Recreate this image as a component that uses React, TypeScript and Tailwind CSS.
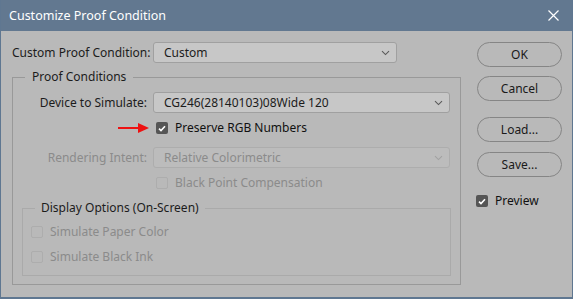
import React from 'react';

const font = { fontFamily: '"Noto Sans", "Open Sans", sans-serif' };

const Chevron: React.FC<{ muted?: boolean }> = ({ muted }) => (
    <svg width="9" height="6" viewBox="0 0 9 6" className="shrink-0">
        <path d="M1 1.2 L4.5 4.6 L8 1.2" fill="none" stroke={muted ? '#a2a2a2' : '#5a5a5a'} strokeWidth="1.1" />
    </svg>
);

const Select: React.FC<{ value: string; width: string; disabled?: boolean }> = ({ value, width, disabled }) => (
    <div
        className={`${width} h-[21px] flex items-center justify-between pl-[10px] pr-[6px] rounded-[3px] border ${
            disabled ? 'border-[#adadad] bg-[#bcbcbc] text-[#8b8b8b]' : 'border-[#a0a0a0] bg-[#c7c7c7] text-[#1c1c1c]'
        }`}
    >
        <span>{value}</span>
        <Chevron muted={disabled} />
    </div>
);

const Check: React.FC<{ checked?: boolean }> = ({ checked }) =>
    checked ? (
        <div className="w-[12px] h-[12px] rounded-[2px] bg-[#555555] flex items-center justify-center shrink-0">
            <svg width="8" height="7" viewBox="0 0 8 7">
                <path d="M1 3.6 L3 5.6 L7 1.3" fill="none" stroke="#ffffff" strokeWidth="1.6" />
            </svg>
        </div>
    ) : (
        <div className="w-[12px] h-[12px] rounded-[2px] border border-[#adadad] shrink-0"></div>
    );

const Btn: React.FC<{ label: string; className?: string }> = ({ label, className }) => (
    <div
        className={`w-[85px] h-[25px] rounded-full border border-[#858585] flex items-center justify-center text-[#1a1a1a] ${className ?? ''}`}
    >
        {label}
    </div>
);

const App: React.FC = () => {
    return (
        <div style={font} className="w-[573px] h-[299px] bg-[#b9b9b9] border-x border-b-2 border-[#5f7791] text-[12px] leading-[16px] overflow-hidden">
            <div className="h-[31px] -mx-px bg-[#627890] flex items-center justify-between pl-[9px] pr-[14px] text-white text-[12.5px]">
                <span>Customize Proof Condition</span>
                <svg width="11" height="11" viewBox="0 0 11 11">
                    <path d="M0.5 0.5 L10.5 10.5 M10.5 0.5 L0.5 10.5" stroke="#ffffff" strokeWidth="1.2" />
                </svg>
            </div>

            <div className="flex pt-[11px]">
                <div className="pl-[11px] w-[460px]">
                    <div className="flex items-center h-[21px]">
                        <span className="w-[141px] text-[#1c1c1c]">Custom Proof Condition:</span>
                        <Select value="Custom" width="w-[244px]" />
                    </div>

                    <fieldset className="mt-[6px] border border-[#999999] pb-[8px] w-[449px]">
                        <legend className="ml-[12px] px-[7px] text-[#1c1c1c]">Proof Conditions</legend>

                        <div className="flex items-center h-[21px] mt-[7px]">
                            <span className="w-[140px] text-right pr-[6px] text-[#1c1c1c]">Device to Simulate:</span>
                            <Select value="CG246(28140103)08Wide 120" width="w-[297px]" />
                        </div>

                        <div className="flex items-center h-[20px] mt-[5px]">
                            <div className="w-[140px] flex justify-end pr-[3px]">
                                <svg width="32" height="12" viewBox="0 0 32 12">
                                    <path d="M0 6 L22 6" stroke="#ee1111" strokeWidth="2" />
                                    <path d="M20 1 L31 6 L20 11 Z" fill="#ee1111" />
                                </svg>
                            </div>
                            <div className="ml-[3px] flex items-center gap-[7px]">
                                <Check checked />
                                <span className="text-[#111111]">Preserve RGB Numbers</span>
                            </div>
                        </div>

                        <div className="flex items-center h-[21px] mt-[9px]">
                            <span className="w-[140px] text-right pr-[6px] text-[#8b8b8b]">Rendering Intent:</span>
                            <Select value="Relative Colorimetric" width="w-[297px]" disabled />
                        </div>

                        <div className="flex items-center h-[20px] mt-[5px] pl-[143px] gap-[7px]">
                            <Check />
                            <span className="text-[#8b8b8b]">Black Point Compensation</span>
                        </div>

                        <fieldset className="mt-[7px] mx-[9px] border border-[#aaaaaa] pb-[8px]">
                            <legend className="ml-[12px] px-[6px] text-[#1c1c1c]">Display Options (On-Screen)</legend>
                            <div className="flex items-center h-[20px] mt-[6px] pl-[8px] gap-[7px]">
                                <Check />
                                <span className="text-[#8b8b8b]">Simulate Paper Color</span>
                            </div>
                            <div className="flex items-center h-[20px] mt-[5px] pl-[8px] gap-[7px]">
                                <Check />
                                <span className="text-[#8b8b8b]">Simulate Black Ink</span>
                            </div>
                        </fieldset>
                    </fieldset>
                </div>

                <div className="ml-[16px] flex flex-col">
                    <Btn label="OK" />
                    <Btn label="Cancel" className="mt-[9px]" />
                    <Btn label="Load..." className="mt-[16px]" />
                    <Btn label="Save..." className="mt-[10px]" />
                    <div className="flex items-center h-[20px] mt-[14px] gap-[7px] -ml-px">
                        <Check checked />
                        <span className="text-[#111111]">Preview</span>
                    </div>
                </div>
            </div>
        </div>
    );
};

export default App;
